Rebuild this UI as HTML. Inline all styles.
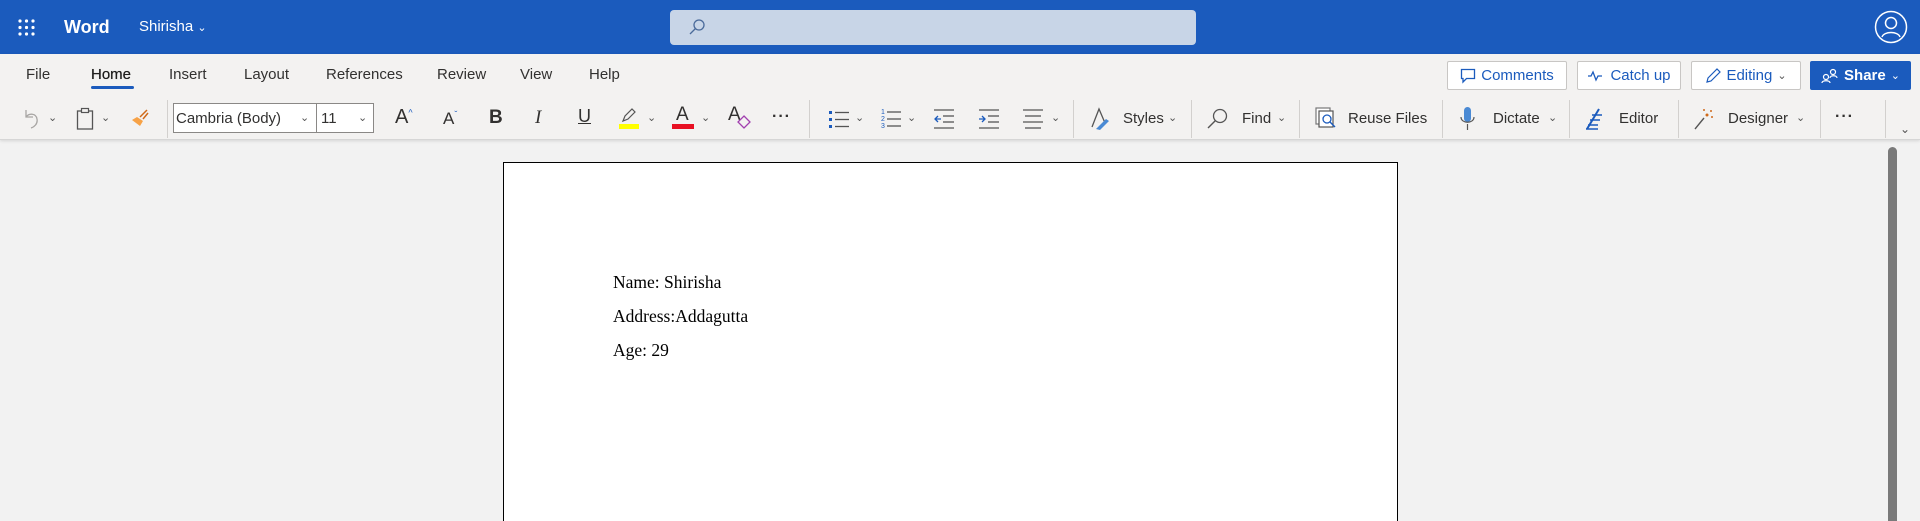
<!DOCTYPE html>
<html style="width:1920px;height:521px;overflow:hidden"><head><meta charset="utf-8"><style>
*{margin:0;padding:0;box-sizing:border-box}
body{width:1920px;height:521px;overflow:hidden;background:#f2f2f2;font-family:"Liberation Sans",sans-serif;position:relative;color:#323130}
.a{position:absolute}
#hdr{left:0;top:0;width:1920px;height:54px;background:#1b5bbd}
#rib{left:0;top:54px;width:1920px;height:86px;background:#f3f2f1;border-bottom:1px solid #d6d6d6;box-shadow:0 1px 3px rgba(0,0,0,.12)}
.tab{top:66px;font-size:15px;color:#323130}
.t{font-size:15px;color:#323130;top:110px}
.sep{top:100px;width:1px;height:38px;background:#d2d0ce}
.btn{top:61px;height:29px;background:#fff;border:1px solid #c8c6c4;border-radius:2px;color:#1b5bbd;font-size:15px;display:flex;align-items:center;justify-content:center;gap:5px}
.chev{font-size:11px;color:#555}
svg{position:absolute}
</style></head><body>
<div id="hdr" class="a"></div>
<svg style="left:18px;top:19px" width="17" height="17"><g fill="#fff"><circle cx="2" cy="2" r="1.6"/><circle cx="8.5" cy="2" r="1.6"/><circle cx="15" cy="2" r="1.6"/><circle cx="2" cy="8.5" r="1.6"/><circle cx="8.5" cy="8.5" r="1.6"/><circle cx="15" cy="8.5" r="1.6"/><circle cx="2" cy="15" r="1.6"/><circle cx="8.5" cy="15" r="1.6"/><circle cx="15" cy="15" r="1.6"/></g></svg>
<div class="a" style="left:64px;top:17px;color:#fff;font-weight:bold;font-size:18px">Word</div>
<div class="a" style="left:139px;top:18px;color:#fff;font-size:15px">Shirisha <span style="font-size:11px">&#8964;</span></div>
<div class="a" style="left:670px;top:10px;width:526px;height:35px;background:#c8d5e7;border-radius:4px"></div>
<svg style="left:688px;top:18px" width="18" height="18"><circle cx="11" cy="7" r="5" fill="none" stroke="#4a6a9a" stroke-width="1.3"/><line x1="7.5" y1="10.5" x2="2" y2="16" stroke="#4a6a9a" stroke-width="1.3"/></svg>
<svg style="left:1874px;top:10px" width="34" height="34"><circle cx="17" cy="17" r="15.5" fill="none" stroke="#fff" stroke-width="1.5"/><circle cx="17" cy="13" r="5.5" fill="none" stroke="#fff" stroke-width="1.5"/><path d="M8 27c2-6 16-6 18 0" fill="none" stroke="#fff" stroke-width="1.5"/></svg>
<div id="rib" class="a"></div>
<div class="a tab" style="left:26px">File</div>
<div class="a tab" style="left:91px;color:#201f1e;text-shadow:0 0 .4px #000">Home</div>
<div class="a" style="left:91px;top:86px;width:43px;height:3px;background:#1b5bbd;border-radius:2px"></div>
<div class="a tab" style="left:169px">Insert</div>
<div class="a tab" style="left:244px">Layout</div>
<div class="a tab" style="left:326px">References</div>
<div class="a tab" style="left:437px">Review</div>
<div class="a tab" style="left:520px">View</div>
<div class="a tab" style="left:589px">Help</div>
<div class="a btn" style="left:1447px;width:120px"><svg style="position:static" width="16" height="16"><path d="M1.5 1.5h13v9h-8l-3.5 3.5v-3.5h-1.5z" fill="none" stroke="#1b5bbd" stroke-width="1.3"/></svg>Comments</div>
<div class="a btn" style="left:1577px;width:104px"><svg style="position:static" width="18" height="12"><path d="M1 6h3l2-4 3 8 2-4h4" fill="none" stroke="#1b5bbd" stroke-width="1.3"/></svg>Catch up</div>
<div class="a btn" style="left:1691px;width:110px"><svg style="position:static" width="16" height="17"><path d="M2 15l1-4 9-9 3 3-9 9z" fill="none" stroke="#1b5bbd" stroke-width="1.2"/></svg>Editing <span class="chev">&#8964;</span></div>
<div class="a btn" style="left:1810px;width:101px;background:#1b5bbd;border-color:#1b5bbd;color:#fff;font-weight:bold"><svg style="position:static" width="18" height="16"><circle cx="5" cy="9" r="2.5" fill="none" stroke="#fff" stroke-width="1.2"/><path d="M1 15c0-3 8-3 8 0" fill="none" stroke="#fff" stroke-width="1.2"/><circle cx="12" cy="4" r="2.5" fill="none" stroke="#fff" stroke-width="1.2"/><path d="M9 10c0-3 7-3 7 0" fill="none" stroke="#fff" stroke-width="1.2"/></svg>Share <span class="chev" style="color:#fff;font-weight:normal">&#8964;</span></div>

<svg style="left:22px;top:108px" width="20" height="22"><path d="M4 2v7h7M4 9c3-4 10-4 11 2 1 5-3 8-6 9" fill="none" stroke="#a8a6a4" stroke-width="1.3"/></svg>
<div class="a t chev" style="left:48px;top:111px">&#8964;</div>
<svg style="left:76px;top:107px" width="18" height="24"><rect x="1.5" y="4" width="15" height="18" fill="none" stroke="#555" stroke-width="1.3"/><rect x="5.5" y="1.5" width="7" height="4" fill="#f3f2f1" stroke="#555" stroke-width="1.2"/></svg>
<div class="a t chev" style="left:101px;top:111px">&#8964;</div>
<svg style="left:130px;top:108px" width="20" height="20"><path d="M2 12l8 6 3-5-6-4z" fill="#f7a246"/><path d="M10 9l7-7M13 11l5-6" stroke="#d06a1a" stroke-width="1.5"/></svg>
<div class="a sep" style="left:167px"></div>
<div class="a" style="left:173px;top:103px;width:144px;height:30px;background:#fff;border:1px solid #8a8886"></div>
<div class="a" style="left:316px;top:103px;width:58px;height:30px;background:#fff;border:1px solid #8a8886"></div>
<div class="a t" style="left:176px;top:110px">Cambria (Body)</div>
<div class="a t chev" style="left:300px;top:111px">&#8964;</div>
<div class="a t" style="left:321px;top:110px">11</div>
<div class="a t chev" style="left:358px;top:111px">&#8964;</div>
<div class="a" style="left:395px;top:106px;font-size:20px">A<sup style="font-size:9px;color:#1b5bbd">^</sup></div>
<div class="a" style="left:443px;top:109px;font-size:17px">A<sup style="font-size:9px;color:#1b5bbd">&#711;</sup></div>
<div class="a" style="left:489px;top:107px;font-size:19px;font-weight:bold">B</div>
<div class="a" style="left:535px;top:107px;font-size:19px;font-style:italic;font-family:'Liberation Serif',serif">I</div>
<div class="a" style="left:578px;top:106px;font-size:18px;text-decoration:underline">U</div>
<svg style="left:619px;top:107px" width="20" height="22"><path d="M4 14l2-5 7-7 3 3-7 7z" fill="none" stroke="#555" stroke-width="1.2"/><rect x="0" y="17" width="20" height="5" fill="#ffff00"/></svg>
<div class="a t chev" style="left:647px;top:111px">&#8964;</div>
<div class="a" style="left:676px;top:104px;font-size:19px">A</div>
<div class="a" style="left:672px;top:124px;width:22px;height:5px;background:#e81123"></div>
<div class="a t chev" style="left:701px;top:111px">&#8964;</div>
<div class="a" style="left:728px;top:104px;font-size:19px">A</div>
<svg style="left:737px;top:115px" width="14" height="14"><path d="M7 1l6 6-6 6-6-6z" fill="none" stroke="#a13faf" stroke-width="1.3"/></svg>
<div class="a" style="left:772px;top:108px;font-size:16px;font-weight:bold;letter-spacing:1px">&middot;&middot;&middot;</div>
<div class="a sep" style="left:809px"></div>
<svg style="left:829px;top:109px" width="20" height="20"><g fill="#1b5bbd"><rect x="0" y="2" width="3" height="3"/><rect x="0" y="9" width="3" height="3"/><rect x="0" y="16" width="3" height="3"/></g><g stroke="#555" stroke-width="1.3"><line x1="6" y1="3.5" x2="20" y2="3.5"/><line x1="6" y1="10.5" x2="20" y2="10.5"/><line x1="6" y1="17.5" x2="20" y2="17.5"/></g></svg>
<div class="a t chev" style="left:855px;top:111px">&#8964;</div>
<svg style="left:881px;top:108px" width="20" height="22"><g fill="#1b5bbd" font-size="7" font-family="Liberation Sans"><text x="0" y="6">1</text><text x="0" y="13">2</text><text x="0" y="20">3</text></g><g stroke="#555" stroke-width="1.3"><line x1="6" y1="4" x2="20" y2="4"/><line x1="6" y1="11" x2="20" y2="11"/><line x1="6" y1="18" x2="20" y2="18"/></g></svg>
<div class="a t chev" style="left:907px;top:111px">&#8964;</div>
<svg style="left:934px;top:108px" width="20" height="22"><g stroke="#555" stroke-width="1.3"><line x1="0" y1="2" x2="20" y2="2"/><line x1="9" y1="8" x2="20" y2="8"/><line x1="9" y1="14" x2="20" y2="14"/><line x1="0" y1="20" x2="20" y2="20"/></g><path d="M7 11H1m3-3l-3 3 3 3" fill="none" stroke="#1b5bbd" stroke-width="1.3"/></svg>
<svg style="left:979px;top:108px" width="20" height="22"><g stroke="#555" stroke-width="1.3"><line x1="0" y1="2" x2="20" y2="2"/><line x1="9" y1="8" x2="20" y2="8"/><line x1="9" y1="14" x2="20" y2="14"/><line x1="0" y1="20" x2="20" y2="20"/></g><path d="M0 11h6m-3-3l3 3-3 3" fill="none" stroke="#1b5bbd" stroke-width="1.3"/></svg>
<svg style="left:1023px;top:108px" width="20" height="22"><g stroke="#555" stroke-width="1.3"><line x1="0" y1="2" x2="20" y2="2"/><line x1="2" y1="8" x2="18" y2="8"/><line x1="0" y1="14" x2="20" y2="14"/><line x1="2" y1="20" x2="18" y2="20"/></g></svg>
<div class="a t chev" style="left:1051px;top:111px">&#8964;</div>
<div class="a sep" style="left:1073px"></div>
<svg style="left:1090px;top:107px" width="22" height="24"><path d="M2 20L9 2l6 14" fill="none" stroke="#555" stroke-width="1.3"/><path d="M6 22l10-10 3 2-9 9z" fill="#4a8ad4"/></svg>
<div class="a t" style="left:1123px">Styles</div>
<div class="a t chev" style="left:1168px;top:111px">&#8964;</div>
<div class="a sep" style="left:1191px"></div>
<svg style="left:1207px;top:108px" width="22" height="22"><circle cx="13" cy="8" r="6.5" fill="none" stroke="#555" stroke-width="1.3"/><line x1="8.5" y1="12.5" x2="1" y2="20" stroke="#555" stroke-width="1.4"/></svg>
<div class="a t" style="left:1242px">Find</div>
<div class="a t chev" style="left:1277px;top:111px">&#8964;</div>
<div class="a sep" style="left:1299px"></div>
<svg style="left:1315px;top:107px" width="22" height="22"><rect x="1" y="1" width="14" height="16" fill="#fff" stroke="#777" stroke-width="1.2"/><rect x="4" y="4" width="14" height="16" fill="#fff" stroke="#555" stroke-width="1.2"/><circle cx="12" cy="12" r="4" fill="none" stroke="#1b5bbd" stroke-width="1.3"/><line x1="15" y1="15" x2="20" y2="20" stroke="#1b5bbd" stroke-width="1.4"/></svg>
<div class="a t" style="left:1348px">Reuse Files</div>
<div class="a sep" style="left:1442px"></div>
<svg style="left:1460px;top:106px" width="16" height="26"><rect x="4" y="1" width="7" height="15" rx="3.5" fill="#4a8ad4"/><path d="M1 11c0 7 13 7 13 0M7.5 18v6" fill="none" stroke="#555" stroke-width="1.2"/></svg>
<div class="a t" style="left:1493px">Dictate</div>
<div class="a t chev" style="left:1548px;top:111px">&#8964;</div>
<div class="a sep" style="left:1569px"></div>
<svg style="left:1584px;top:107px" width="20" height="24"><path d="M3 22L15 2" stroke="#1b5bbd" stroke-width="2"/><path d="M8 8h10M6 13h10M4 18h10M2 22h12" stroke="#1b5bbd" stroke-width="1.6"/></svg>
<div class="a t" style="left:1619px">Editor</div>
<div class="a sep" style="left:1678px"></div>
<svg style="left:1693px;top:107px" width="22" height="24"><path d="M2 22l9-11" stroke="#555" stroke-width="1.4"/><g fill="#d06a1a"><circle cx="14" cy="8" r="1.5"/><circle cx="18" cy="4" r="1"/><circle cx="11" cy="3" r="1"/><circle cx="19" cy="10" r="1"/></g></svg>
<div class="a t" style="left:1728px">Designer</div>
<div class="a t chev" style="left:1796px;top:111px">&#8964;</div>
<div class="a sep" style="left:1820px"></div>
<div class="a" style="left:1835px;top:108px;font-size:16px;font-weight:bold;letter-spacing:1px">&middot;&middot;&middot;</div>
<div class="a sep" style="left:1885px"></div>
<div class="a chev" style="left:1900px;top:122px;font-size:12px">&#8964;</div>

<div class="a" style="left:503px;top:162px;width:895px;height:359px;background:#fff;border:1.5px solid #000;border-bottom:none"></div>
<div class="a" style="left:613px;top:265px;font-family:'Liberation Serif',serif;font-size:17.5px;color:#000;line-height:34px">Name: Shirisha<br>Address:Addagutta<br>Age: 29</div>
<div class="a" style="left:1888px;top:147px;width:9px;height:374px;background:#7a7a7a;border-radius:5px 5px 0 0"></div>
</body></html>
